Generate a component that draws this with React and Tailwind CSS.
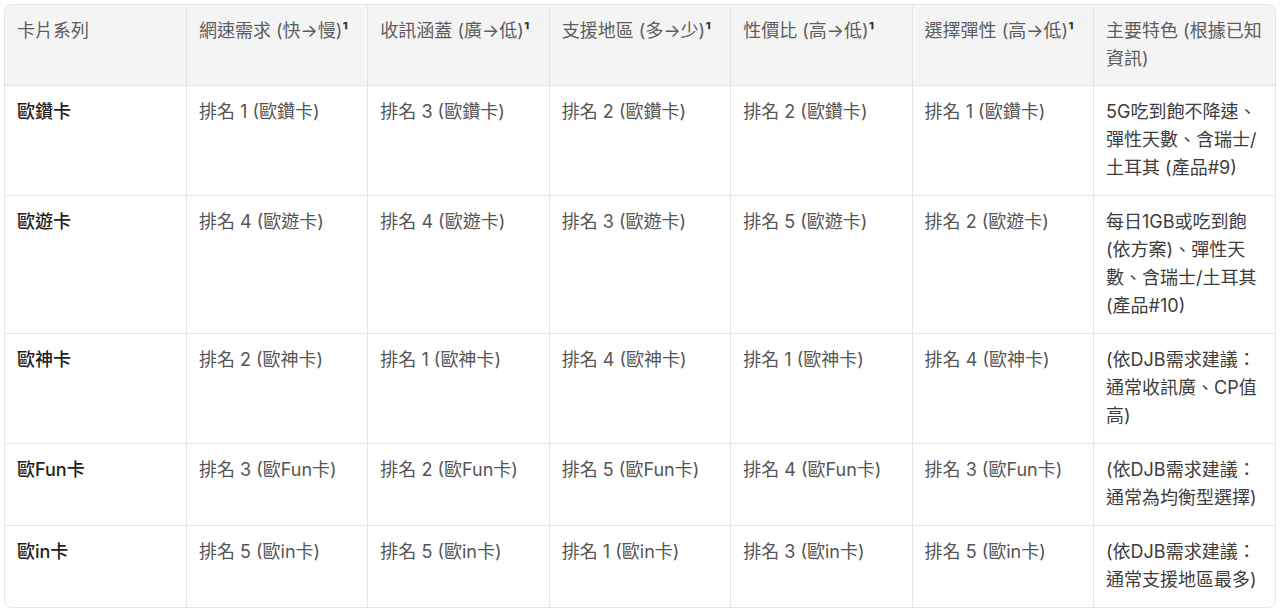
import React from "react";

const headers = [
  "卡片系列",
  "網速需求 (快→慢)¹",
  "收訊涵蓋 (廣→低)¹",
  "支援地區 (多→少)¹",
  "性價比 (高→低)¹",
  "選擇彈性 (高→低)¹",
  "主要特色 (根據已知資訊)",
];

const rows = [
  ["歐鑽卡", 1, 3, 2, 2, 1, "5G吃到飽不降速、彈性天數、含瑞士/土耳其 (產品#9)"],
  ["歐遊卡", 4, 4, 3, 5, 2, "每日1GB或吃到飽 (依方案)、彈性天數、含瑞士/土耳其 (產品#10)"],
  ["歐神卡", 2, 1, 4, 1, 4, "(依DJB需求建議：通常收訊廣、CP值高)"],
  ["歐Fun卡", 3, 2, 5, 4, 3, "(依DJB需求建議：通常為均衡型選擇)"],
  ["歐in卡", 5, 5, 1, 3, 5, "(依DJB需求建議：通常支援地區最多)"],
];

const cell = "border border-[#e5e5e5] px-3 pt-3 pb-[13px] align-top";

function Header({ text }) {
  const sup = text.endsWith("¹");
  const main = sup ? text.slice(0, -1) : text;
  return (
    <th className="border border-[#e5e5e5] px-3 py-3 text-left align-top font-normal text-[#5d5d5d]">
      {main}
      {sup && <span className="font-semibold text-[#333]">¹</span>}
    </th>
  );
}

export default function App() {
  return (
    <div className="bg-white p-1" style={{ fontFamily: '"Inter", "Noto Sans CJK TC", sans-serif' }}>
      <div className="overflow-hidden rounded-lg border border-[#e5e5e5]">
        <table className="w-full table-fixed border-collapse border-hidden text-[18px] leading-7">
          <thead className="bg-[#f4f4f4]">
            <tr>
              {headers.map((h) => (
                <Header key={h} text={h} />
              ))}
            </tr>
          </thead>
          <tbody>
            {rows.map((r) => (
              <tr key={r[0]}>
                <td className={`${cell} font-medium text-[#1f1f1f]`}>{r[0]}</td>
                {r.slice(1, 6).map((n, i) => (
                  <td key={i} className={`${cell} text-[#555]`}>
                    排名 {n} ({r[0]})
                  </td>
                ))}
                <td className={`${cell} text-[#3d3d3d]`}>{r[6]}</td>
              </tr>
            ))}
          </tbody>
        </table>
      </div>
    </div>
  );
}
